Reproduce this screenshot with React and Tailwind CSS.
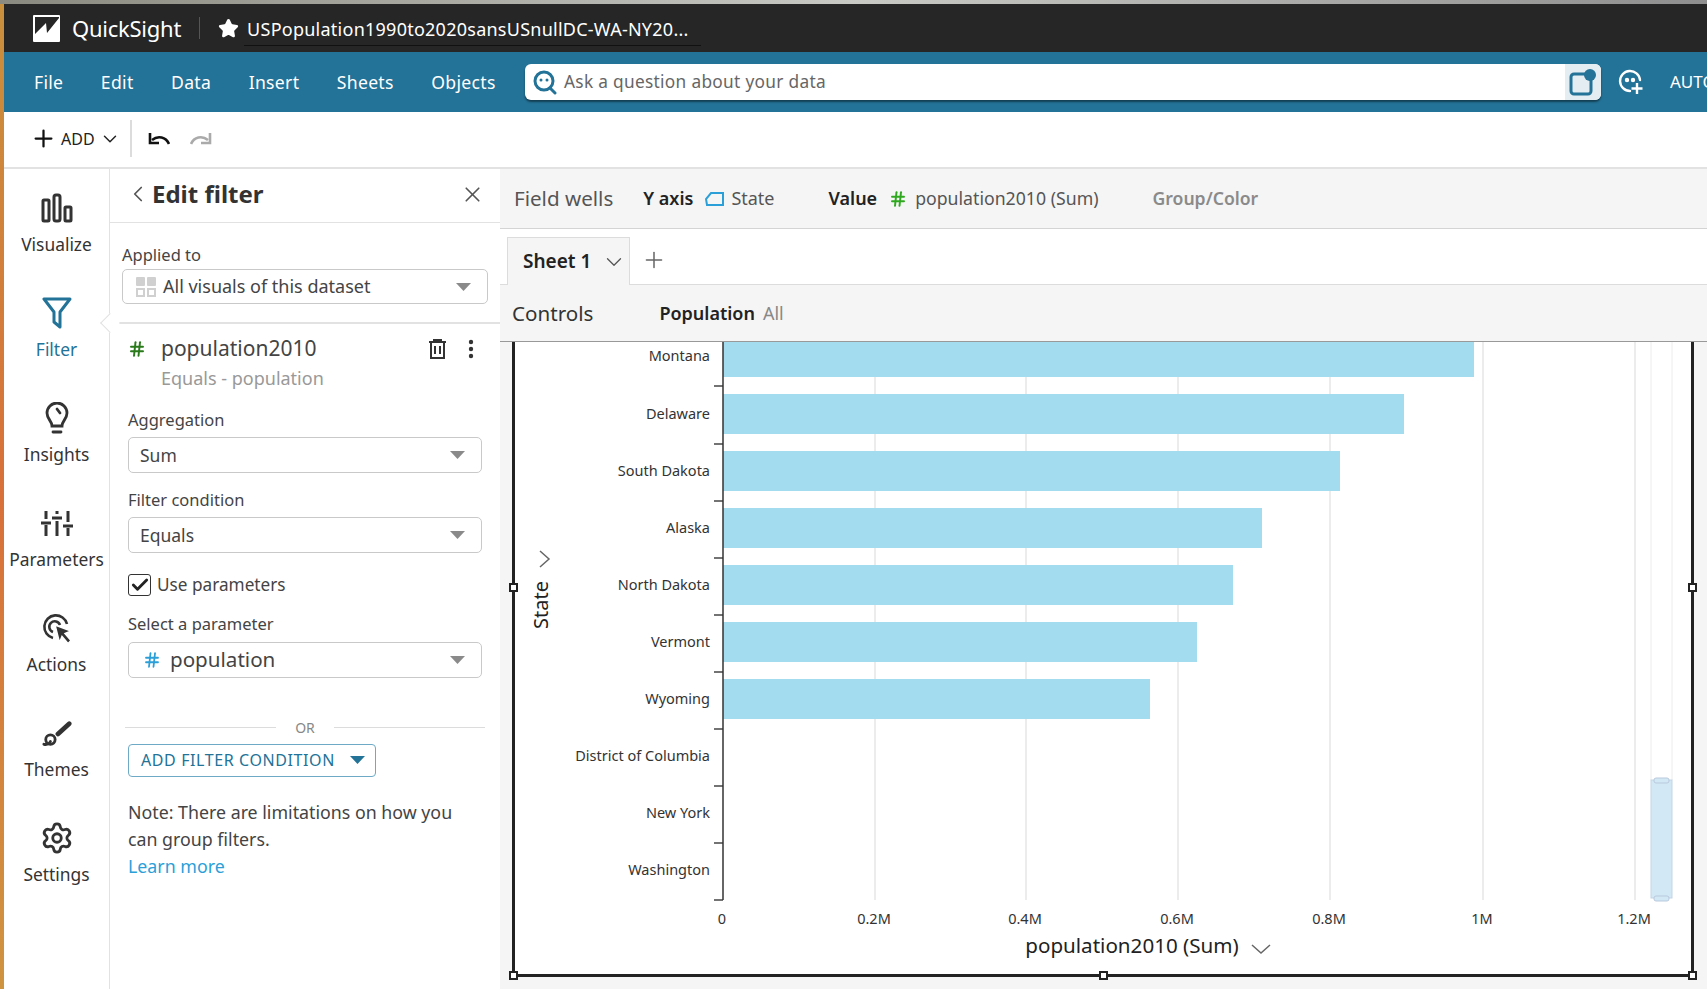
import { Star, Plus, ChevronDown, ChevronLeft, X, Settings, Check, Hash } from "lucide-react";

const Caret = ({ color = "text-[#8a8a8a]" }) => (
  <svg className={`w-[15px] h-[8px] ${color}`} viewBox="0 0 15 8" fill="currentColor">
    <path d="M0 0h15L7.5 8z" />
  </svg>
);

const VisualizeIcon = () => (
  <svg width="32" height="30" viewBox="0 0 32 30" fill="none" stroke="#333" strokeWidth="3">
    <rect x="2" y="7" width="6" height="21" rx="1" />
    <rect x="13" y="2" width="6" height="26" rx="2" />
    <rect x="24" y="14" width="6" height="14" rx="1" />
  </svg>
);

const FilterIcon = () => (
  <svg width="30" height="32" viewBox="0 0 30 32" fill="none" stroke="#237297" strokeWidth="3" strokeLinejoin="round">
    <path d="M2 2h26L18 15v15l-6-5V15z" />
  </svg>
);

const InsightsIcon = () => (
  <svg width="24" height="32" viewBox="0 0 24 32" fill="none" stroke="#333" strokeWidth="2.8" strokeLinecap="round">
    <path d="M7 24c0-5-5-7-5-13a10 10 0 0 1 20 0c0 6-5 8-5 13z" />
    <path d="M8 30h8M12 7l3 4" />
  </svg>
);

const ParamsIcon = () => (
  <svg width="32" height="27" viewBox="0 0 32 27" fill="none" stroke="#333" strokeWidth="3">
    <path d="M5 1v8M5 15v11M0 13h10M16 1v3M16 11v15M11 8h10M27 1v11M27 18v8M22 16h10" />
  </svg>
);

const ActionsIcon = () => (
  <svg width="32" height="31" viewBox="0 0 32 31" fill="none" stroke="#333" strokeWidth="2.6">
    <path d="M12 25a11.5 11.5 0 1 1 14-14" />
    <path d="M12 19a5.5 5.5 0 1 1 7-7" />
    <path d="M14 12l16 6-6 2.5 6 7-3 3-6-7-2.5 6z" fill="#333" stroke="white" strokeWidth="1.5" />
  </svg>
);

const ThemesIcon = () => (
  <svg width="30" height="29" viewBox="0 0 32 29" fill="none" stroke="#333">
    <path d="M17 15L29 4" strokeWidth="5" strokeLinecap="round" />
    <path d="M2 26c5 1 6-1 7-3" strokeWidth="3" strokeLinecap="round" />
    <circle cx="9" cy="21" r="5" strokeWidth="3" />
  </svg>
);

const railItems = [
  { label: "Visualize", icon: <VisualizeIcon /> },
  { label: "Filter", icon: <FilterIcon />, active: true },
  { label: "Insights", icon: <InsightsIcon /> },
  { label: "Parameters", icon: <ParamsIcon /> },
  { label: "Actions", icon: <ActionsIcon /> },
  { label: "Themes", icon: <ThemesIcon /> },
  { label: "Settings", icon: <Settings size={34} strokeWidth={2} color="#333" /> },
];

const Select = ({ children, big }) => (
  <div className={`mx-[18px] h-[36px] w-[354px] border border-[#c9c9c9] rounded-[5px] flex items-center justify-between pl-[11px] pr-[16px] ${big ? "text-[20.6px]" : "text-[17.5px]"} text-[#444]`}>
    <span className="flex items-center">{children}</span>
    <Caret />
  </div>
);

const Label = ({ children, className = "" }) => (
  <div className={`ml-[18px] text-[16.5px] leading-[20px] text-[#444] ${className}`}>{children}</div>
);

const states = [
  { name: "Montana", right: 751, y: 356 },
  { name: "Delaware", right: 681, y: 414 },
  { name: "South Dakota", right: 617, y: 471 },
  { name: "Alaska", right: 539, y: 528 },
  { name: "North Dakota", right: 510, y: 585 },
  { name: "Vermont", right: 474, y: 642 },
  { name: "Wyoming", right: 427, y: 699 },
  { name: "District of Columbia", right: 0, y: 756 },
  { name: "New York", right: 0, y: 813 },
  { name: "Washington", right: 0, y: 870 },
];

const ticks = [
  { label: "0", x: 723 },
  { label: "0.2M", x: 875 },
  { label: "0.4M", x: 1026 },
  { label: "0.6M", x: 1178 },
  { label: "0.8M", x: 1330 },
  { label: "1M", x: 1483 },
  { label: "1.2M", x: 1635 },
];

// chart coordinates are page coordinates shifted by the frame origin
const ox = 515;
const oy = 342;

function Chart() {
  return (
    <svg width="1177" height="632" viewBox="0 0 1177 632" className="block">
      {ticks.slice(1).map((t) => (
        <line key={t.label} x1={t.x - ox} x2={t.x - ox} y1="0" y2={900 - oy} stroke="#e6e6e6" strokeWidth="1.5" />
      ))}
      <line x1={1651 - ox} x2={1651 - ox} y1="0" y2={780 - oy} stroke="#ececec" />
      <line x1={1672 - ox} x2={1672 - ox} y1="0" y2={780 - oy} stroke="#ececec" />

      {states.map((s) => {
        const top = Math.max(s.y - 20 - oy, 0);
        const bottom = s.y + 20 - oy + (s.y === 356 ? 1 : 0);
        return (
          <g key={s.name}>
            {s.right > 0 && <rect x={723 - ox} y={top} width={s.right} height={bottom - top} fill="#a3dcef" />}
            <text x={710 - ox} y={s.y - oy + 5} textAnchor="end" fontSize="14.5" fill="#333">{s.name}</text>
            <line x1={714 - ox} x2={723 - ox} y1={s.y + 30 - oy} y2={s.y + 30 - oy} stroke="#444" strokeWidth="1.5" />
          </g>
        );
      })}
      <line x1={723 - ox} x2={723 - ox} y1="0" y2={900 - oy} stroke="#333" strokeWidth="1.5" />

      {ticks.map((t) => (
        <text key={t.label} x={t.x - ox - 1} y={924 - oy} textAnchor="middle" fontSize="14.5" fill="#333">{t.label}</text>
      ))}

      <text x="0" y="0" transform={`translate(${548 - ox} ${605 - oy}) rotate(-90)`} textAnchor="middle" fontSize="20" fill="#222">State</text>
      <path d={`M${540 - ox} ${551 - oy}l9 8-9 8`} fill="none" stroke="#666" strokeWidth="1.5" />

      <text x={1132 - ox} y={953 - oy} textAnchor="middle" fontSize="20.6" fill="#222">population2010 (Sum)</text>
      <path d={`M${1252 - ox} ${945 - oy}l9 8 9-8`} fill="none" stroke="#666" strokeWidth="1.5" />

      <rect x={1651 - ox} y={780 - oy} width="21" height="118" fill="#d2e8f4" stroke="#c3d5e6" />
      <rect x={1654 - ox} y={778 - oy} width="15" height="5" rx="2" fill="#d2e8f4" stroke="#b9c9de" />
      <rect x={1654 - ox} y={896 - oy} width="15" height="5" rx="2" fill="#d2e8f4" stroke="#b9c9de" />
    </svg>
  );
}

const Handle = ({ className }) => (
  <div className={`absolute w-[9px] h-[9px] bg-white border-2 border-[#222] ${className}`} />
);

export default function App() {
  return (
    <div className="relative w-[1707px] h-[989px] overflow-hidden bg-white flex flex-col font-['Noto_Sans',sans-serif] text-[#333]">
      {/* desktop peeking round the window */}
      <div className="h-[4px] shrink-0 bg-gradient-to-r from-[#8a8a80] via-[#c9c9c5] to-[#8f8f8f]" />
      <div className="flex-1 flex min-h-0">
        <div className="w-[4px] shrink-0 bg-gradient-to-b from-[#c9903c] via-[#d8703a] to-[#cf9440]" />
        <div className="flex-1 min-w-0 flex flex-col">
          {/* title bar */}
          <div className="h-[48px] shrink-0 bg-[#262626] flex items-center pl-[29px] text-white">
            <svg width="27" height="27" viewBox="0 0 27 27" className="shrink-0">
              <rect width="27" height="27" rx="1" fill="white" />
              <path d="M2 2H26V3L14 18 13 8 2 19z" fill="#262626" />
            </svg>
            <span className="ml-[12px] text-[22px] tracking-[-0.25px]">QuickSight</span>
            <div className="ml-[18px] w-px h-[22px] bg-[#555]" />
            <Star size={21} fill="white" className="ml-[18px] shrink-0" />
            <div className="ml-[5px] w-[457px] h-[32px] border-b border-[#111] flex items-center pl-[3px] mt-[4px] shrink-0">
              <span className="text-[18px] tracking-[0.25px] whitespace-nowrap">USPopulation1990to2020sansUSnullDC-WA-NY20...</span>
            </div>
          </div>

          {/* menu bar */}
          <div className="h-[60px] shrink-0 bg-[#237297] flex items-center text-white text-[17.6px]">
            <div className="flex pl-[30px] gap-[37.5px] w-[521px] shrink-0 tracking-[0.3px]">
              <span>File</span>
              <span>Edit</span>
              <span>Data</span>
              <span>Insert</span>
              <span>Sheets</span>
              <span>Objects</span>
            </div>
            <div className="w-[1076px] shrink-0 h-[36px] bg-white rounded-[6px] shadow-[0_2px_2px_rgba(0,0,0,0.45)] flex items-center overflow-hidden">
              <svg width="26" height="26" viewBox="0 0 26 26" fill="none" className="ml-[7px] shrink-0">
                <circle cx="12" cy="12" r="9" stroke="#237297" strokeWidth="3" />
                <path d="M18 19l5 5" stroke="#237297" strokeWidth="3" strokeLinecap="round" />
                <circle cx="9" cy="11" r="1.5" fill="#237297" />
                <circle cx="15" cy="11" r="1.5" fill="#237297" />
              </svg>
              <span className="ml-[6px] text-[17.3px] text-[#666] tracking-[0.3px]">Ask a question about your data</span>
              <div className="ml-auto w-[36px] h-full bg-[#e4edf2] flex items-center justify-center">
                <svg width="28" height="28" viewBox="0 0 28 28" fill="none">
                  <rect x="2" y="6" width="20" height="20" rx="3" stroke="#237297" strokeWidth="3" />
                  <circle cx="21" cy="7" r="6" fill="#237297" />
                </svg>
              </div>
            </div>
            <svg width="28" height="28" viewBox="0 0 28 28" fill="none" stroke="white" strokeWidth="2.4" className="ml-[17px] shrink-0">
              <path d="M12 23a10 10 0 1 1 10-11" strokeLinecap="round" />
              <path d="M19 15v11M13.5 20.5h11" />
              <circle cx="9" cy="12" r="1" fill="white" />
              <circle cx="15" cy="12" r="1" fill="white" />
            </svg>
            <span className="ml-[24px] text-[17px] whitespace-nowrap">AUTO</span>
          </div>

          {/* toolbar */}
          <div className="h-[57px] shrink-0 border-b-2 border-[#e2e2e2] flex items-center pl-[26px] pb-[2px]">
            <Plus size={27} strokeWidth={2} color="#111" />
            <span className="ml-[4px] text-[16px] text-[#222]">ADD</span>
            <ChevronDown size={22} strokeWidth={1.6} color="#222" className="ml-[4px]" />
            <div className="ml-[9px] w-[2px] h-[37px] bg-[#dcdcdc]" />
            <svg width="22" height="14" viewBox="0 0 22 14" fill="none" stroke="#111" strokeWidth="2.6" className="ml-[16px]">
              <path d="M21 12C18 5 10 3 4 8" />
              <path d="M2 1v10h9" />
            </svg>
            <svg width="22" height="14" viewBox="0 0 22 14" fill="none" stroke="#aaa" strokeWidth="2.6" className="ml-[20px]">
              <path d="M1 12C4 5 12 3 18 8" />
              <path d="M20 1v10h-9" />
            </svg>
          </div>

          <div className="flex-1 min-h-0 flex">
            {/* icon rail */}
            <div className="w-[106px] shrink-0 border-r border-[#e2e2e2] flex flex-col items-center pt-[23px]">
              {railItems.map((item) => (
                <div key={item.label} className="h-[105px] w-full flex flex-col items-center">
                  <div className="h-[32px] flex items-center justify-center">{item.icon}</div>
                  <span className={`mt-[8px] text-[17.4px] leading-[24px] ${item.active ? "text-[#237297]" : "text-[#333]"}`}>{item.label}</span>
                </div>
              ))}
            </div>

            {/* filter panel */}
            <div className="relative w-[390px] shrink-0 flex flex-col bg-white">
              <div className="h-[54px] shrink-0 border-b border-[#e2e2e2] flex items-center pl-[15px] pr-[15px] pb-[3px]">
                <ChevronLeft size={26} strokeWidth={1.6} color="#555" />
                <span className="ml-[1px] text-[24px] font-bold text-[#333]">Edit filter</span>
                <X size={25} strokeWidth={1.6} color="#555" className="ml-auto" />
              </div>

              <div className="ml-[12px] mt-[22px] text-[16.5px] leading-[20px] text-[#444]">Applied to</div>
              <div className="ml-[12px] mt-[4px] h-[35px] w-[366px] border border-[#c9c9c9] rounded-[5px] flex items-center justify-between pl-[13px] pr-[16px] text-[18px] text-[#444]">
                <span className="flex items-center gap-[7px]">
                  <svg width="20" height="20" viewBox="0 0 20 20">
                    <rect x="0" y="0" width="9" height="9" rx="1" fill="#d0d0d0" />
                    <rect x="11" y="0" width="9" height="9" rx="1" fill="#d0d0d0" />
                    <rect x="1" y="12" width="7" height="7" fill="none" stroke="#d0d0d0" strokeWidth="2" />
                    <rect x="12" y="12" width="7" height="7" fill="none" stroke="#d0d0d0" strokeWidth="2" />
                  </svg>
                  All visuals of this dataset
                </span>
                <Caret />
              </div>

              <div className="mt-[18px] h-[2px] bg-[#e2e2e2]" />

              <div className="flex items-center h-[50px] pl-[18px] pr-[26px]">
                <Hash size={18} strokeWidth={2.6} color="#2a7a1b" />
                <span className="ml-[15px] text-[21px] text-[#444]">population2010</span>
                <svg width="17" height="20" viewBox="0 0 17 20" fill="none" stroke="#333" strokeWidth="2" className="ml-auto">
                  <path d="M0 3h17M5 3V1h7v2M2 3v16h13V3M6 7v8M11 7v8" />
                </svg>
                <svg width="6" height="20" viewBox="0 0 6 20" fill="#333" className="ml-[22px]">
                  <circle cx="3" cy="3" r="2.2" />
                  <circle cx="3" cy="10" r="2.2" />
                  <circle cx="3" cy="17" r="2.2" />
                </svg>
              </div>
              <div className="ml-[51px] mt-[-8px] text-[18px] leading-[24px] text-[#999]">Equals - population</div>

              <Label className="mt-[20px]">Aggregation</Label>
              <div className="mt-[7px]"><Select>Sum</Select></div>

              <Label className="mt-[17px]">Filter condition</Label>
              <div className="mt-[7px]"><Select>Equals</Select></div>

              <div className="ml-[18px] mt-[19px] flex items-center">
                <div className="w-[23px] h-[22px] border border-[#333] rounded-[3px] flex items-center justify-center">
                  <Check size={20} strokeWidth={3.4} color="#222" />
                </div>
                <span className="ml-[6px] text-[17.2px] text-[#444]">Use parameters</span>
              </div>

              <Label className="mt-[16px]">Select a parameter</Label>
              <div className="mt-[8px]">
                <Select big>
                  <Hash size={18} strokeWidth={2.4} color="#2b9fd8" className="ml-[3px] mr-[9px]" />
                  population
                </Select>
              </div>

              <div className="mx-[15px] mt-[41px] flex items-center gap-[19px] h-[18px]">
                <div className="flex-1 h-px bg-[#dcdcdc]" />
                <span className="text-[14px] text-[#888]">OR</span>
                <div className="flex-1 h-px bg-[#dcdcdc]" />
              </div>

              <div className="ml-[18px] mt-[7px] w-[248px] h-[33px] border border-[#6ea9c6] rounded-[4px] flex items-center justify-between pl-[12px] pr-[10px] text-[16px] text-[#237297] tracking-[0.6px] whitespace-nowrap">
                <span>ADD FILTER CONDITION</span>
                <Caret color="text-[#237297]" />
              </div>

              <p className="ml-[18px] mt-[22px] w-[350px] text-[17.8px] leading-[27px] text-[#444]">
                Note: There are limitations on how you can group filters.
                <br />
                <span className="text-[#2b9fd8]">Learn more</span>
              </p>

              {/* notch pointing at the active rail item */}
              <div className="absolute left-[-7px] top-[147px] w-[14px] h-[14px] bg-white rotate-45 border-l border-b border-[#e2e2e2]" />
            </div>

            {/* main area */}
            <div className="flex-1 min-w-0 flex flex-col bg-[#f5f5f5]">
              <div className="h-[60px] shrink-0 border-b border-[#d4d4d4] flex items-center pl-[14px] whitespace-nowrap">
                <span className="text-[20.6px] text-[#555]">Field wells</span>
                <span className="ml-[30px] text-[18px] font-semibold text-[#222]">Y axis</span>
                <svg width="20" height="16" viewBox="0 0 20 16" fill="none" stroke="#2b9fd8" strokeWidth="2" className="ml-[12px]">
                  <path d="M18 2H6L1 8l1 6h16z" />
                </svg>
                <span className="ml-[6px] text-[18px] text-[#555]">State</span>
                <span className="ml-[54px] text-[18px] font-semibold text-[#222]">Value</span>
                <Hash size={18} strokeWidth={2.6} color="#2fa81f" className="ml-[12px]" />
                <span className="ml-[8px] text-[17.7px] text-[#555]">population2010 (Sum)</span>
                <span className="ml-[54px] text-[17.6px] font-semibold text-[#8a8a8a]">Group/Color</span>
              </div>

              <div className="h-[56px] shrink-0 bg-white border-b border-[#dcdcdc] flex items-end pl-[7px]">
                <div className="w-[123px] h-[48px] mb-[-1px] bg-[#f5f5f5] border border-[#dcdcdc] border-b-0 flex items-center pl-[15px]">
                  <span className="text-[19px] font-semibold text-[#222]">Sheet 1</span>
                  <ChevronDown size={26} strokeWidth={1.2} color="#555" className="ml-[10px]" />
                </div>
                <Plus size={26} strokeWidth={1.4} color="#666" className="ml-[11px] mb-[11px]" />
              </div>

              <div className="h-[57px] shrink-0 border-b border-[#999] flex items-center pl-[12px]">
                <span className="text-[20.6px] text-[#333]">Controls</span>
                <span className="ml-[66px] text-[18px] font-semibold text-[#222]">Population</span>
                <span className="ml-[8px] text-[18px] text-[#888]">All</span>
              </div>

              <div className="relative ml-[12px] mr-[13px] h-[635px] bg-white border-l-[3px] border-r-[3px] border-b-[3px] border-[#222]">
                <Chart />
                <Handle className="left-[-6px] top-[241px]" />
                <Handle className="right-[-6px] top-[241px]" />
                <Handle className="left-[-6px] bottom-[-6px]" />
                <Handle className="left-[584px] bottom-[-6px]" />
                <Handle className="right-[-6px] bottom-[-6px]" />
              </div>
            </div>
          </div>
        </div>
      </div>
    </div>
  );
}
